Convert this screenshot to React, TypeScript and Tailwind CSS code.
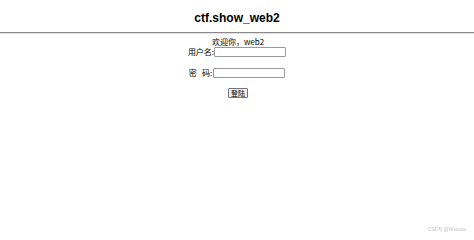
import React from "react"

export default function App() {
  return (
    <main className="relative w-[474px] h-[237px] bg-white text-black overflow-hidden font-['Liberation_Sans','Noto_Sans_CJK_SC',sans-serif]">
      <h1 className="pt-[11px] text-center text-[12px] leading-[14px] font-bold">ctf.show_web2</h1>
      <div className="mt-[7px] h-[2px] border-t border-[#8a8a8a] border-b border-b-[#e4e4e4]" />

      <div className="flex flex-col items-center text-[8px] leading-[10px] mt-[3px] font-['Noto_Sans_CJK_SC',sans-serif]">
        <p className="ml-[2px]">欢迎你，web2</p>
        <div className="flex items-center">
          <span>用户名:</span>
          <input className="w-[72px] h-[10px] border border-[#9a9a9a] rounded-[1px] bg-white" />
        </div>
        <div className="flex items-center mt-[11px]">
          <span className="mr-[1px]">密&nbsp;&nbsp;&nbsp;码:</span>
          <input className="w-[72px] h-[10px] border border-[#9a9a9a] rounded-[1px] bg-white" />
        </div>
        <button className="mt-[10px] ml-[2px] h-[10px] px-[2px] text-[7px] leading-[8px] border border-[#767676] rounded-[1px] bg-[#efefef]">登陆</button>
      </div>

      <span className="absolute right-[8px] bottom-[5px] text-[5px] leading-[6px] text-[#c4c4c4]">CSDN @Wxiuxiu</span>
    </main>
  )
}
